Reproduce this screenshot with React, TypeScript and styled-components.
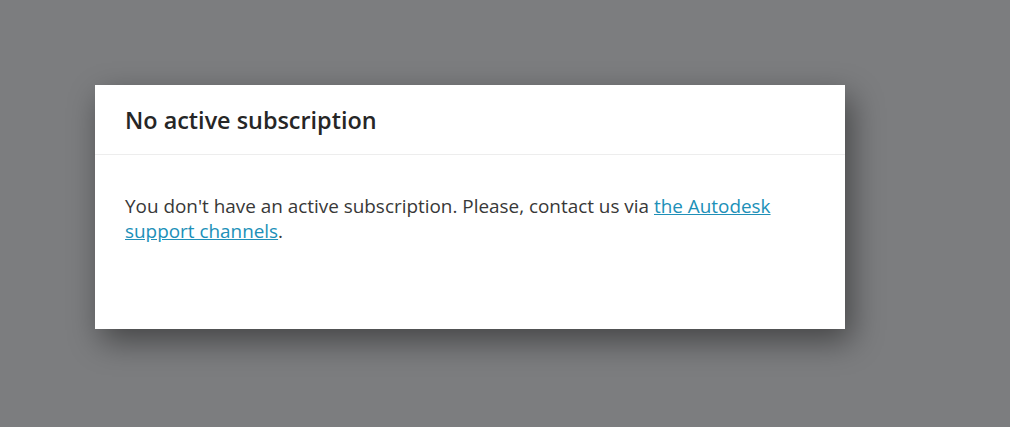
import React from "react";
import styled, { createGlobalStyle } from "styled-components";

const Global = createGlobalStyle`
  html, body { margin: 0; padding: 0; }
  body { font-family: "Open Sans", "Noto Sans", "Liberation Sans", sans-serif; }
`;

const Backdrop = styled.div`
  width: 1010px;
  height: 427px;
  background: #7c7d7f;
  box-sizing: border-box;
  padding: 85px 0 0 95px;
  overflow: hidden;
`;

const Dialog = styled.div`
  width: 750px;
  height: 244px;
  background: #ffffff;
  box-shadow: 6px 12px 30px rgba(0, 0, 0, 0.45);
  display: flex;
  flex-direction: column;
`;

const Header = styled.div`
  height: 70px;
  box-sizing: border-box;
  padding: 0 30px;
  display: flex;
  align-items: center;
  border-bottom: 1px solid #ededed;
`;

const Title = styled.h2`
  margin: 0;
  font-size: 23.4px;
  font-weight: 600;
  color: #262626;
`;

const Body = styled.div`
  padding: 39px 30px 0;
`;

const Text = styled.p`
  margin: 0;
  font-size: 18.9px;
  line-height: 25px;
  color: #383838;
  max-width: 690px;
`;

const Link = styled.a`
  color: #2090b8;
  text-decoration: underline;
`;

export default function App() {
  return (
    <>
      <Global />
      <Backdrop>
        <Dialog>
          <Header>
            <Title>No active subscription</Title>
          </Header>
          <Body>
            <Text>
              You don't have an active subscription. Please, contact us via{" "}
              <Link href="#">the Autodesk support channels</Link>.
            </Text>
          </Body>
        </Dialog>
      </Backdrop>
    </>
  );
}
